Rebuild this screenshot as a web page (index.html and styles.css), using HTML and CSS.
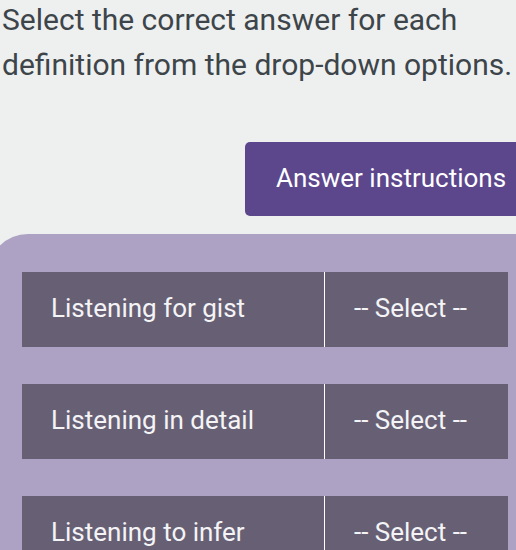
FILE: index.html
```html
<!DOCTYPE html>
<html lang="en">
<head>
<meta charset="utf-8">
<link rel="stylesheet" href="styles.css">
</head>
<body>
<main class="page">
  <h1 class="prompt">Select the correct answer for each definition from the drop-down options.</h1>
  <div class="actions">
    <button class="instructions-btn" type="button">Answer instructions</button>
  </div>
  <section class="panel">
    <div class="row">
      <div class="term">Listening for gist</div>
      <div class="select">-- Select --</div>
    </div>
    <div class="row">
      <div class="term">Listening in detail</div>
      <div class="select">-- Select --</div>
    </div>
    <div class="row">
      <div class="term">Listening to infer</div>
      <div class="select">-- Select --</div>
    </div>
  </section>
</main>
</body>
</html>
```
FILE: styles.css
```css
html, body {
  margin: 0;
  padding: 0;
  background: #eef0ef;
  overflow: hidden;
  height: 550px;
}
.page {
  width: 516px;
  font-family: Roboto, "Liberation Sans", sans-serif;
}
.prompt {
  margin: -3px 0 0 0;
  padding: 0 0 0 2px;
  font-size: 30px;
  font-weight: 400;
  line-height: 45px;
  color: #3d454a;
  width: 520px;
}
.actions {
  display: flex;
  justify-content: flex-end;
  margin-top: 55px;
  margin-right: -20px;
}
.instructions-btn {
  width: 291px;
  height: 74px;
  border: 0;
  border-radius: 5px;
  background: #5c468c;
  color: #ffffff;
  font-family: Roboto, "Liberation Sans", sans-serif;
  font-size: 26px;
  text-align: left;
  padding: 0 0 2px 31px;
}
.panel {
  margin-top: 18px;
  margin-left: -12px;
  width: 545px;
  background: #ada2c4;
  border-radius: 40px 32px 0 0;
  padding: 38px 0 20px 34px;
  display: flex;
  flex-direction: column;
  gap: 37px;
}
.row {
  display: flex;
  width: 486px;
  height: 75px;
  background: #676075;
  color: #f4f4f6;
  font-size: 26px;
}
.term {
  width: 303px;
  border-right: 1px solid #ffffff;
  display: flex;
  align-items: center;
  padding: 0 0 3px 29px;
  box-sizing: border-box;
}
.select {
  flex: 1;
  display: flex;
  align-items: center;
  justify-content: center;
  padding: 0 12px 3px 0;
}
```
